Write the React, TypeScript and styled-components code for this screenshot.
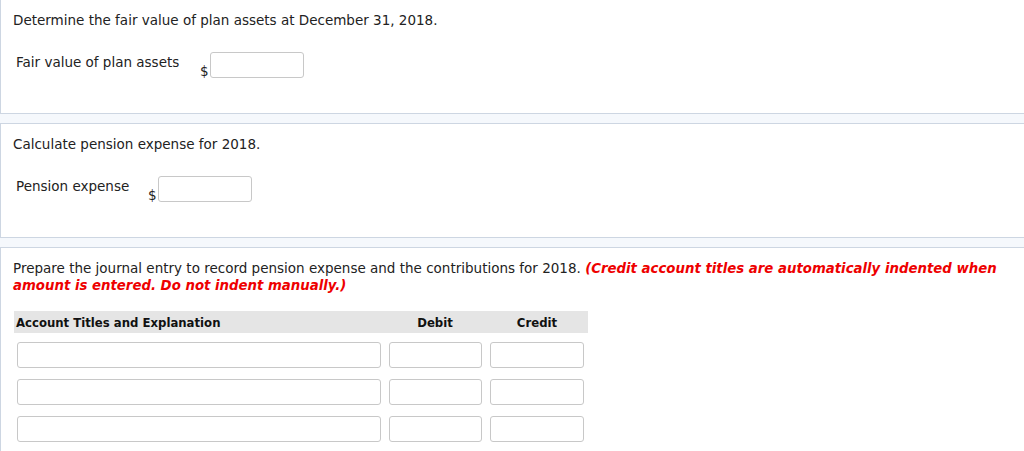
import React from "react";
import styled, { createGlobalStyle } from "styled-components";

const Global = createGlobalStyle`
  html, body { margin: 0; padding: 0; background: #f5f8fc; }
  body { font-family: "DejaVu Sans", Verdana, sans-serif; font-size: 13.5px; color: #222; }
`;

const Page = styled.div`
  display: flex;
  flex-direction: column;
  gap: 9px;
  width: 1030px;
  overflow: hidden;
`;

const Panel = styled.section<{ $h: number; $top?: number }>`
  background: #fff;
  border: 1px solid #cdd6e2;
  border-right: none;
  box-sizing: border-box;
  height: ${(p) => p.$h}px;
  margin-top: ${(p) => p.$top ?? 0}px;
  padding: 12px 0 0 12px;
`;

const Prompt = styled.p`
  margin: 0;
  line-height: 16px;
  max-width: 995px;
`;

const Red = styled.span`
  color: #e00;
  font-weight: bold;
  font-style: italic;
  font-size: 13.3px;
`;

const Field = styled.div`
  display: flex;
  align-items: flex-start;
  margin-top: 24px;
  padding-left: 3px;
`;

const Label = styled.span<{ $w: number }>`
  width: ${(p) => p.$w}px;
  line-height: 16px;
  padding-top: 2px;
`;

const Dollar = styled.span`
  padding-top: 11px;
  line-height: 16px;
  margin-right: 1px;
`;

const Box = styled.input<{ $w: number }>`
  width: ${(p) => p.$w}px;
  height: 26px;
  box-sizing: border-box;
  border: 1px solid #c8c8c8;
  border-radius: 3px;
  background: #fff;
  margin: 0;
  padding: 0 4px;
  font: inherit;
`;

const Table = styled.div`
  margin-top: 17px;
  margin-left: 1px;
  width: 574px;
`;

const Head = styled.div`
  display: grid;
  grid-template-columns: 370px 102px 102px;
  height: 22px;
  align-items: center;
  background: #e5e5e5;
  font-weight: bold;
  font-family: "DejaVu Sans Condensed", "DejaVu Sans", sans-serif;
  font-size: 13px;
  color: #111;
`;

const HeadCell = styled.div<{ $center?: boolean }>`
  padding-left: ${(p) => (p.$center ? "0" : "2px")};
  text-align: ${(p) => (p.$center ? "center" : "left")};
`;

const Row = styled.div`
  display: grid;
  grid-template-columns: 372px 101px 102px;
  padding-left: 3px;
  margin-top: 9px;
  & + & { margin-top: 11px; }
`;

export default function App() {
  return (
    <>
      <Global />
      <Page>
        <Panel $h={115} $top={-1}>
          <Prompt>Determine the fair value of plan assets at December 31, 2018.</Prompt>
          <Field>
            <Label $w={184}>Fair value of plan assets</Label>
            <Dollar>$</Dollar>
            <Box $w={94} />
          </Field>
        </Panel>
        <Panel $h={115}>
          <Prompt>Calculate pension expense for 2018.</Prompt>
          <Field>
            <Label $w={132}>Pension expense</Label>
            <Dollar>$</Dollar>
            <Box $w={94} />
          </Field>
        </Panel>
        <Panel $h={210}>
          <Prompt>
            Prepare the journal entry to record pension expense and the contributions for 2018.{" "}
            <Red>(Credit account titles are automatically indented when amount is entered. Do not indent manually.)</Red>
          </Prompt>
          <Table>
            <Head>
              <HeadCell>Account Titles and Explanation</HeadCell>
              <HeadCell $center>Debit</HeadCell>
              <HeadCell $center>Credit</HeadCell>
            </Head>
            {[0, 1, 2].map((i) => (
              <Row key={i}>
                <Box $w={364} />
                <Box $w={93} />
                <Box $w={94} />
              </Row>
            ))}
          </Table>
        </Panel>
      </Page>
    </>
  );
}
